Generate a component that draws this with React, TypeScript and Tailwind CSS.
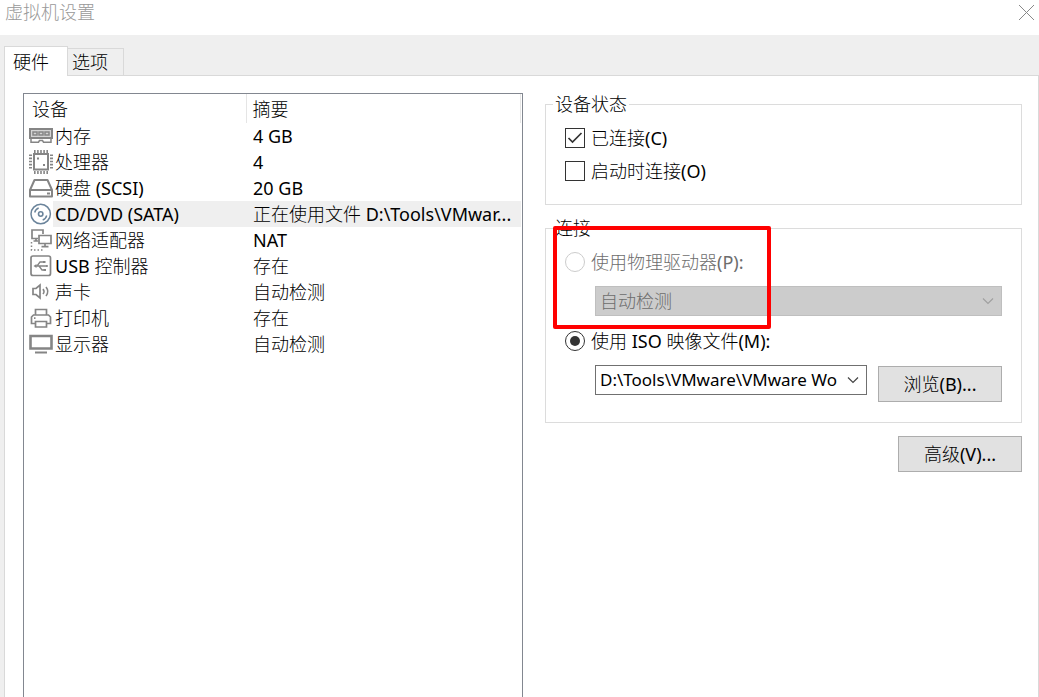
import type { ReactNode } from 'react';

const icons: Record<string, ReactNode> = {
  memory: (
    <>
      <path d="M1 6h22v9H1z" strokeWidth="2" fill="#d4d4d4" />
      <path d="M2 15.500v3.700h7.500l1-1.700h3l1 1.700H22v-3.700" strokeWidth="1.500" />
      <path d="M4 9h4v3H4zM10 9h4v3h-4zM16 9h4v3h-4z" strokeWidth="1.500" />
    </>
  ),
  cpu: (
    <>
      <path d="M5 5h14v15.500H5z" strokeWidth="2" />
      <path d="M5 2.500h14M5 23.500h14" strokeWidth="3" strokeDasharray="1.600 1.500" />
      <path d="M1.500 5.500v15M22.500 5.500v15" strokeWidth="3" strokeDasharray="1.600 1.500" />
      <path d="M8 8.500h2v2H8zM14 15h2v2h-2z" fill="currentColor" stroke="none" />
    </>
  ),
  disk: (
    <>
      <path d="M5.500 5h13L23 15v6.500H1V15z" strokeWidth="2" strokeLinejoin="round" />
      <path d="M1 15h22M18 18.500h3" strokeWidth="1.800" />
    </>
  ),
  network: (
    <>
      <path d="M9 11.500H3V3h11v4M4.500 14H9M7 11.500V14" strokeWidth="1.700" />
      <path d="M10 8.500h12v8H10zM16 16.500v3M12.500 19.700h7" strokeWidth="1.700" />
      <path d="M2.500 15v8h12" strokeWidth="1.500" strokeDasharray="1.500 2" />
    </>
  ),
  usb: (
    <>
      <rect x="2" y="3" width="19.500" height="19.500" rx="2" strokeWidth="1.700" />
      <path d="M6 13h12M8 13l3-4h3M10 13l3 4h2" strokeWidth="1.300" />
      <path d="M7.500 11v4L4.500 13zM14 8h2.500v2H14zM14.500 16H17v2h-2.500z" fill="currentColor" stroke="none" />
      <circle cx="18" cy="13" r="1" fill="currentColor" stroke="none" />
    </>
  ),
  sound: (
    <>
      <path d="M4 9.500h3L11 6v13l-4-3.500H4z" strokeWidth="1.700" />
      <path d="M14 10q2 2.500 0 5M17 8q3.500 4.500 0 9" strokeWidth="1.600" />
    </>
  ),
  printer: (
    <>
      <path d="M6.500 10V4.500h11V10M6 18.500H2.500V12l2-2h15l2 2v6.500H18" strokeWidth="1.700" />
      <path d="M6.500 16.500h11V22h-11zM5 13.200h1.500" strokeWidth="1.700" />
    </>
  ),
  display: (
    <>
      <path d="M1.500 5h21v12.500h-21z" strokeWidth="2.600" />
      <path d="M6 21.500h12" strokeWidth="2" />
    </>
  ),
};

function DeviceIcon({ name }: { name: string }) {
  if (name === 'disc') {
    return (
      <svg className="block text-[#6b849b]" width="24" height="26" viewBox="0 0 24 26" fill="none" stroke="currentColor">
        <circle cx="11.700" cy="13" r="9.700" strokeWidth="1.500" />
        <circle cx="11.700" cy="13" r="2.200" strokeWidth="1.600" />
        <path d="M5.700 11.500a6.200 6.200 0 0 1 4-4.500M17.700 14.500a6.200 6.200 0 0 1-4 4.500" strokeWidth="1.400" />
      </svg>
    );
  }
  return (
    <svg className="block text-[#858585]" width="24" height="26" viewBox="0 0 24 26" fill="none" stroke="currentColor">
      {icons[name]}
    </svg>
  );
}

const devices = [
  { icon: 'memory', name: '内存', summary: '4 GB' },
  { icon: 'cpu', name: '处理器', summary: '4' },
  { icon: 'disk', name: '硬盘 (SCSI)', summary: '20 GB' },
  { icon: 'disc', name: 'CD/DVD (SATA)', summary: '正在使用文件 D:\\Tools\\VMwar...', selected: true },
  { icon: 'network', name: '网络适配器', summary: 'NAT' },
  { icon: 'usb', name: 'USB 控制器', summary: '存在' },
  { icon: 'sound', name: '声卡', summary: '自动检测' },
  { icon: 'printer', name: '打印机', summary: '存在' },
  { icon: 'display', name: '显示器', summary: '自动检测' },
];

function Checkbox({ label, checked = false }: { label: string; checked?: boolean }) {
  return (
    <label className="flex items-center gap-1.5 leading-5">
      <span className="relative size-5">
        <input
          type="checkbox"
          defaultChecked={checked}
          className="peer block size-5 appearance-none border border-[#333333] bg-white"
        />
        <svg
          className="pointer-events-none absolute inset-0 hidden text-[#333333] peer-checked:block"
          width="20"
          height="20"
          viewBox="0 0 20 20"
          fill="none"
          stroke="currentColor"
          strokeWidth="1.700"
        >
          <path d="M3.500 10l4 4 9-9" />
        </svg>
      </span>
      {label}
    </label>
  );
}

function Radio({ label, checked = false, disabled = false }: { label: string; checked?: boolean; disabled?: boolean }) {
  return (
    <label className={`flex items-center gap-1.5 leading-5 ${disabled ? 'text-[#6d6d6d]' : ''}`}>
      <input
        type="radio"
        name="source"
        defaultChecked={checked}
        disabled={disabled}
        className="grid size-5 appearance-none place-items-center rounded-full border border-[#333333] bg-white before:size-2.5 before:rounded-full checked:before:bg-[#333333] disabled:border-[#cccccc]"
      />
      {label}
    </label>
  );
}

function Chevron({ className }: { className: string }) {
  return (
    <svg
      className={`pointer-events-none absolute top-[11px] right-2 ${className}`}
      width="12"
      height="8"
      viewBox="0 0 12 8"
      fill="none"
      stroke="currentColor"
      strokeWidth="1.200"
    >
      <path d="M1 1.500l5 5 5-5" />
    </svg>
  );
}

export default function App() {
  return (
    <div className="flex h-screen flex-col overflow-hidden bg-[#efefef] font-['Noto_Sans','Noto_Sans_CJK_SC_Light','Noto_Sans_CJK_SC',sans-serif] text-[18px] text-black">
      <header className="flex h-[35px] shrink-0 items-start justify-between bg-white pr-1 pl-[5px]">
        <h1 className="leading-6 text-[#999999]">虚拟机设置</h1>
        <button type="button" aria-label="关闭" className="mt-1 text-[#888888]">
          <svg className="block" width="17" height="17" viewBox="0 0 17 17" fill="none" stroke="currentColor">
            <path d="M1 1l15 15M16 1L1 16" />
          </svg>
        </button>
      </header>

      <div className="flex min-h-0 flex-1 flex-col pt-[11px] pl-1">
        <div role="tablist" className="flex items-end">
          <button
            type="button"
            role="tab"
            aria-selected="true"
            className="relative z-10 -mb-px h-[30px] w-16 border border-b-0 border-[#d9d9d9] bg-white pl-2 text-left leading-7"
          >
            硬件
          </button>
          <button
            type="button"
            role="tab"
            aria-selected="false"
            className="h-[27px] w-14 border border-b-0 border-l-0 border-[#d9d9d9] pl-1 text-left leading-[27px]"
          >
            选项
          </button>
        </div>

        <main className="grid min-h-0 flex-1 grid-cols-[500fr_477fr] gap-[22px] border border-b-0 border-[#d9d9d9] bg-white pt-[17px] pr-4 pl-[18px]">
          <section className="border border-b-0 border-[#828790] pr-px">
            <table className="w-full table-fixed border-collapse text-left">
              <colgroup>
                <col className="w-[29px]" />
                <col className="w-[193px]" />
                <col />
              </colgroup>
              <thead>
                <tr className="h-[29px]">
                  <th colSpan={2} className="border-r border-[#e5e5e5] p-0 pt-0.5 pl-2 font-normal">
                    设备
                  </th>
                  <th className="border-r border-[#e5e5e5] p-0 pt-0.5 pl-1.5 font-normal">摘要</th>
                </tr>
              </thead>
              <tbody>
                {devices.map((device) => (
                  <tr key={device.name} className="h-[26px] leading-[26px]">
                    <td className="p-0 pl-[5px]">
                      <DeviceIcon name={device.icon} />
                    </td>
                    <td className={`p-0 pl-0.5 whitespace-nowrap ${device.selected ? 'bg-[#efefef]' : ''}`}>
                      {device.name}
                    </td>
                    <td className={`truncate p-0 pl-[7px] ${device.selected ? 'bg-[#efefef]' : ''}`}>
                      {device.summary}
                    </td>
                  </tr>
                ))}
              </tbody>
            </table>
          </section>

          <section className="relative flex flex-col">
            <fieldset className="flex flex-col gap-[13px] border border-[#dcdcdc] px-[19px] pt-[13px] pb-[23px]">
              <legend className="-ml-3 px-0.5 leading-[22px]">设备状态</legend>
              <Checkbox label="已连接(C)" checked />
              <Checkbox label="启动时连接(O)" />
            </fieldset>

            <fieldset className="mt-3 border border-[#dcdcdc] px-[19px] pt-[13px] pb-5">
              <legend className="-ml-3 px-0.5 leading-[22px]">连接</legend>
              <Radio label="使用物理驱动器(P):" disabled />
              <div className="relative mt-3.5 ml-[30px]">
                <select
                  disabled
                  aria-label="物理驱动器"
                  className="block h-[30px] w-full appearance-none border border-[#bfbfbf] bg-[#cccccc] px-1 text-[#6d6d6d] opacity-100"
                >
                  <option>自动检测</option>
                </select>
                <Chevron className="text-[#a0a0a0]" />
              </div>
              <div className="mt-[15px]">
                <Radio label="使用 ISO 映像文件(M):" checked />
              </div>
              <div className="mt-3.5 ml-[30px] flex items-start gap-[11px]">
                <div className="relative min-w-0 flex-1">
                  <select
                    aria-label="ISO 映像文件"
                    className="block h-[30px] w-full appearance-none border border-[#707070] bg-white pr-5 pl-1 text-[17px]"
                  >
                    <option>D:\Tools\VMware\VMware Wo</option>
                  </select>
                  <Chevron className="text-[#444444]" />
                </div>
                <button type="button" className="mt-px h-9 w-[124px] border border-[#adadad] bg-[#e1e1e1]">
                  浏览(B)...
                </button>
              </div>
            </fieldset>

            <button type="button" className="mt-[13px] h-9 w-[124px] self-end border border-[#adadad] bg-[#e1e1e1]">
              高级(V)...
            </button>

            {/* highlight box over the physical drive option */}
            <div className="pointer-events-none absolute top-[133px] left-2 h-[103px] w-[218px] rounded-xs border-4 border-[#ff0000]" />
          </section>
        </main>
      </div>
    </div>
  );
}
